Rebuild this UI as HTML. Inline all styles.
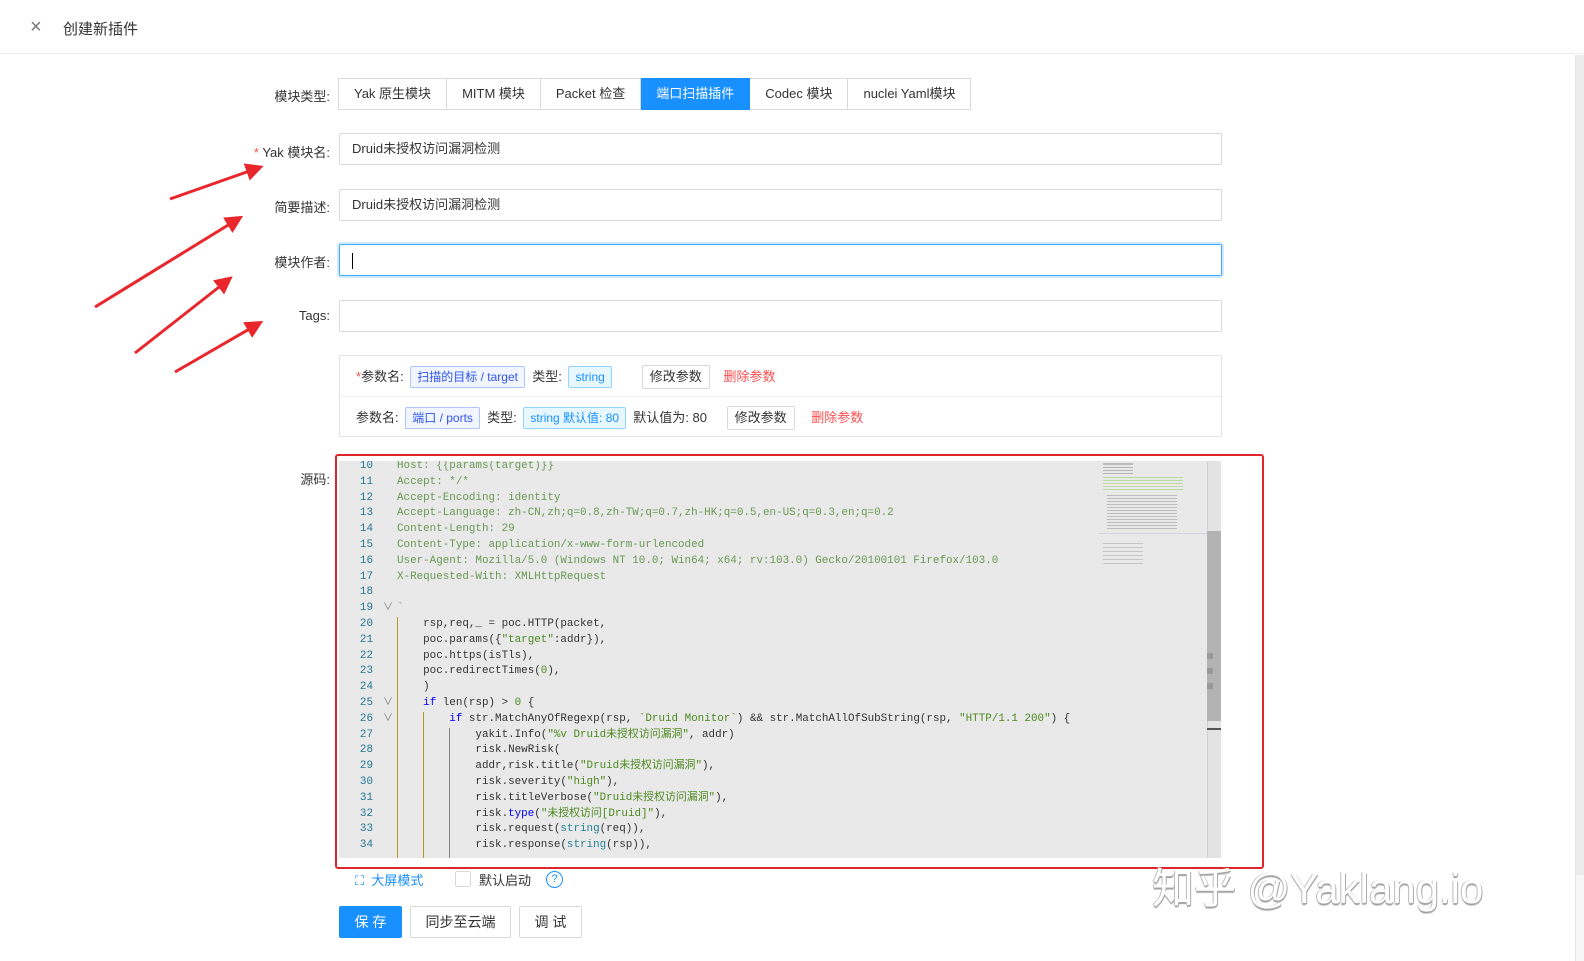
<!DOCTYPE html>
<html><head><meta charset="utf-8">
<style>
*{box-sizing:border-box;margin:0;padding:0}
body{width:1584px;height:961px;overflow:hidden;background:#fff;font-family:"Liberation Sans","Noto Sans CJK SC",sans-serif;font-size:13px;color:#333;position:relative}
.abs{position:absolute}
.hdr{left:0;top:0;width:1584px;height:54px;border-bottom:1px solid #ececec}
.lbl{text-align:right;width:90px;font-size:13px;color:#333}
.inp{left:339px;width:883px;height:32px;border:1px solid #d9d9d9;border-radius:2px;padding:0 12px;line-height:30px;font-size:13px;color:#333}
.seg{top:78px;left:338px;height:32px;display:flex}
.seg div{border:1px solid #d9d9d9;border-left:none;padding:0 15px;line-height:30px;font-size:13px;color:#333}
.seg div:first-child{border-left:1px solid #d9d9d9}
.seg .on{background:#1890ff;color:#fff;border-color:#1890ff}
.tag{display:inline-block;border:1px solid #adc6ff;background:#f0f5ff;color:#2f54eb;padding:0 6px;line-height:20px;font-size:12px;border-radius:2px}
.tagc{border-color:#91d5ff;background:#e6f7ff;color:#1890ff}
.btn{display:inline-block;border:1px solid #d9d9d9;padding:0 7px;line-height:22px;font-size:13px;color:#333;border-radius:2px}
.red{color:#ff4d4f}
.code{left:339px;top:461px;width:868px;height:397px;background:#e9e9e9;overflow:hidden;font-family:"Liberation Mono","Noto Sans CJK SC",monospace;font-size:10.9px;color:#333;line-height:14px}
.ln{position:absolute;left:0;width:34px;text-align:right;color:#237893;height:14px;line-height:14px}
.cl{position:absolute;left:58px;white-space:pre;height:14px;line-height:14px}
.g{color:#6a9955}
.s{color:#4d8a1f}
.k{color:#0000ff}
.t{color:#267f99}
</style></head><body>
<div class="abs hdr"></div>
<div class="abs" style="left:30px;top:17px;font-size:20px;color:#777;line-height:20px">×</div>
<div class="abs" style="left:63px;top:18px;font-size:15px;color:#333">创建新插件</div>

<div class="abs lbl" style="left:240px;top:86px">模块类型:</div>
<div class="abs seg"><div>Yak 原生模块</div><div>MITM 模块</div><div>Packet 检查</div><div class="on">端口扫描插件</div><div>Codec 模块</div><div>nuclei Yaml模块</div></div>

<div class="abs lbl" style="left:240px;top:142px"><span class="red">*</span> Yak 模块名:</div>
<div class="abs inp" style="top:133px">Druid未授权访问漏洞检测</div>
<div class="abs lbl" style="left:240px;top:197px">简要描述:</div>
<div class="abs inp" style="top:189px">Druid未授权访问漏洞检测</div>
<div class="abs lbl" style="left:240px;top:252px">模块作者:</div>
<div class="abs inp" style="top:244px;border-color:#40a9ff;box-shadow:0 0 0 2px rgba(24,144,255,.2)"><span style="display:inline-block;width:1px;height:16px;background:#000;vertical-align:middle"></span></div>
<div class="abs lbl" style="left:240px;top:308px">Tags:</div>
<div class="abs inp" style="top:300px"></div>

<div class="abs" style="left:339px;top:355px;width:883px;height:82px;border:1px solid #e3e3e3;border-radius:2px">
  <div style="position:absolute;left:0;right:0;top:40px;border-top:1px solid #eee"></div>
  <div style="position:absolute;left:16px;top:9px;white-space:nowrap"><span class="red">*</span>参数名: <span class="tag" style="margin-left:3px">扫描的目标 / target</span> &nbsp;类型: <span class="tag tagc" style="margin-left:3px">string</span><span class="btn" style="margin-left:30px">修改参数</span> <span class="red" style="margin-left:10px">删除参数</span></div>
  <div style="position:absolute;left:16px;top:50px;white-space:nowrap">参数名: <span class="tag" style="margin-left:3px">端口 / ports</span> &nbsp;类型: <span class="tag tagc" style="margin-left:3px">string 默认值: 80</span> &nbsp;默认值为: 80 <span class="btn" style="margin-left:16px">修改参数</span> <span class="red" style="margin-left:13px">删除参数</span></div>
</div>

<div class="abs lbl" style="left:240px;top:469px">源码:</div>
<div class="abs code">
<div class="ln" style="top:-2px">10</div><div class="cl g" style="top:-2px">Host: {{params(target)}}</div>
<div class="ln" style="top:13.8px">11</div><div class="cl g" style="top:13.8px">Accept: */*</div>
<div class="ln" style="top:29.6px">12</div><div class="cl g" style="top:29.6px">Accept-Encoding: identity</div>
<div class="ln" style="top:45.4px">13</div><div class="cl g" style="top:45.4px">Accept-Language: zh-CN,zh;q=0.8,zh-TW;q=0.7,zh-HK;q=0.5,en-US;q=0.3,en;q=0.2</div>
<div class="ln" style="top:61.2px">14</div><div class="cl g" style="top:61.2px">Content-Length: 29</div>
<div class="ln" style="top:77px">15</div><div class="cl g" style="top:77px">Content-Type: application/x-www-form-urlencoded</div>
<div class="ln" style="top:92.8px">16</div><div class="cl g" style="top:92.8px">User-Agent: Mozilla/5.0 (Windows NT 10.0; Win64; x64; rv:103.0) Gecko/20100101 Firefox/103.0</div>
<div class="ln" style="top:108.6px">17</div><div class="cl g" style="top:108.6px">X-Requested-With: XMLHttpRequest</div>
<div class="ln" style="top:124.4px">18</div>
<div class="ln" style="top:140.2px">19</div><div class="cl g" style="top:140.2px">`</div>
<div class="ln" style="top:156px">20</div><div class="cl" style="top:156px">    rsp,req,_ = poc.HTTP(packet,</div>
<div class="ln" style="top:171.8px">21</div><div class="cl" style="top:171.8px">    poc.params({<span class="s">"target"</span>:addr}),</div>
<div class="ln" style="top:187.6px">22</div><div class="cl" style="top:187.6px">    poc.https(isTls),</div>
<div class="ln" style="top:203.4px">23</div><div class="cl" style="top:203.4px">    poc.redirectTimes(<span class="s">0</span>),</div>
<div class="ln" style="top:219.2px">24</div><div class="cl" style="top:219.2px">    )</div>
<div class="ln" style="top:235px">25</div><div class="cl" style="top:235px">    <span class="k">if</span> len(rsp) &gt; <span class="s">0</span> {</div>
<div class="ln" style="top:250.8px">26</div><div class="cl" style="top:250.8px">        <span class="k">if</span> str.MatchAnyOfRegexp(rsp, <span class="s">`Druid Monitor`</span>) &amp;&amp; str.MatchAllOfSubString(rsp, <span class="s">"HTTP/1.1 200"</span>) {</div>
<div class="ln" style="top:266.6px">27</div><div class="cl" style="top:266.6px">            yakit.Info(<span class="s">"%v Druid未授权访问漏洞"</span>, addr)</div>
<div class="ln" style="top:282.4px">28</div><div class="cl" style="top:282.4px">            risk.NewRisk(</div>
<div class="ln" style="top:298.2px">29</div><div class="cl" style="top:298.2px">            addr,risk.title(<span class="s">"Druid未授权访问漏洞"</span>),</div>
<div class="ln" style="top:314px">30</div><div class="cl" style="top:314px">            risk.severity(<span class="s">"high"</span>),</div>
<div class="ln" style="top:329.8px">31</div><div class="cl" style="top:329.8px">            risk.titleVerbose(<span class="s">"Druid未授权访问漏洞"</span>),</div>
<div class="ln" style="top:345.6px">32</div><div class="cl" style="top:345.6px">            risk.<span class="k">type</span>(<span class="s">"未授权访问[Druid]"</span>),</div>
<div class="ln" style="top:361.4px">33</div><div class="cl" style="top:361.4px">            risk.request(<span class="t">string</span>(req)),</div>
<div class="ln" style="top:377.2px">34</div><div class="cl" style="top:377.2px">            risk.response(<span class="t">string</span>(rsp)),</div>
<div class="abs" style="left:44px;top:141px;color:#777;font-size:10px">∨</div>
<div class="abs" style="left:44px;top:236px;color:#777;font-size:10px">∨</div>
<div class="abs" style="left:44px;top:252px;color:#777;font-size:10px">∨</div>
<div class="abs" style="left:58px;top:156px;width:1px;height:245px;background:#b8942e"></div>
<div class="abs" style="left:84px;top:251px;width:1px;height:150px;background:#b8942e"></div>
<div class="abs" style="left:110px;top:267px;width:1px;height:134px;background:#888"></div>
<div class="abs" style="left:760px;top:0;width:108px;height:397px;opacity:.55">
  <div class="abs" style="left:4px;top:2px;width:30px;height:2px;background:#999"></div>
  <div class="abs" style="left:4px;top:6px;width:30px;height:8px;background:repeating-linear-gradient(#888 0 1px,transparent 1px 3px)"></div>
  <div class="abs" style="left:4px;top:16px;width:80px;height:14px;background:repeating-linear-gradient(#9c6 0 1px,transparent 1px 3px)"></div>
  <div class="abs" style="left:8px;top:34px;width:70px;height:36px;background:repeating-linear-gradient(#999 0 1px,transparent 1px 3px)"></div>
  <div class="abs" style="left:0;top:72px;width:108px;height:1px;background:#b9c8e0"></div>
  <div class="abs" style="left:4px;top:82px;width:40px;height:24px;background:repeating-linear-gradient(#aaa 0 1px,transparent 1px 4px)"></div>
</div>
</div>
<div class="abs" style="left:1207px;top:461px;width:14px;height:397px;background:#e3e3e3;border-left:1px solid #d0d0d0"></div>
<div class="abs" style="left:1207px;top:531px;width:14px;height:190px;background:#b3b3b3"></div>
<div class="abs" style="left:1207px;top:653px;width:6px;height:6px;background:#999"></div>
<div class="abs" style="left:1207px;top:668px;width:6px;height:6px;background:#999"></div>
<div class="abs" style="left:1207px;top:683px;width:6px;height:6px;background:#999"></div>
<div class="abs" style="left:1207px;top:728px;width:14px;height:2px;background:#555"></div>
<div class="abs" style="left:335px;top:454px;width:929px;height:415px;border:2px solid #e0262b;border-radius:3px"></div>

<div class="abs" style="left:355px;top:870px;color:#1890ff;font-size:13px">⛶ &nbsp;大屏模式</div>
<div class="abs" style="left:455px;top:871px;width:16px;height:16px;border:1px solid #d9d9d9;border-radius:2px"></div>
<div class="abs" style="left:479px;top:870px;font-size:13px">默认启动</div>
<div class="abs" style="left:546px;top:871px;width:17px;height:17px;border:1.5px solid #1890ff;border-radius:50%;color:#1890ff;font-size:11px;text-align:center;line-height:14px">?</div>

<div class="abs" style="left:339px;top:906px;width:63px;height:32px;background:#1890ff;color:#fff;text-align:center;line-height:32px;border-radius:2px;font-size:14px">保 存</div>
<div class="abs" style="left:410px;top:906px;width:101px;height:32px;border:1px solid #d9d9d9;text-align:center;line-height:30px;border-radius:2px;font-size:14px">同步至云端</div>
<div class="abs" style="left:519px;top:906px;width:63px;height:32px;border:1px solid #d9d9d9;text-align:center;line-height:30px;border-radius:2px;font-size:14px">调 试</div>

<div class="abs" style="left:1575px;top:55px;width:9px;height:906px;background:#f7f7f7;border-left:1px solid #e6e6e6"></div>
<div class="abs" style="left:1576px;top:55px;width:8px;height:820px;background:#ececec"></div>

<div class="abs" style="left:1152px;top:855px;font-size:42px;color:#fff;white-space:nowrap;text-shadow:1px 1px 0 #aaa,-1px 0 0 #bbb,0 2px 1px #999;font-family:'Liberation Sans','Noto Sans CJK SC',sans-serif">知乎 @Yaklang.io</div>

<svg class="abs" style="left:0;top:0" width="1584" height="961">
<defs><marker id="a" markerWidth="6" markerHeight="6" refX="4" refY="3" orient="auto"><path d="M0,0 L6,3 L0,6 Z" fill="#e8262b"/></marker></defs>
<g stroke="#e8262b" stroke-width="3" fill="none" marker-end="url(#a)">
<line x1="170" y1="199" x2="258" y2="168"/>
<line x1="95" y1="307" x2="238" y2="219"/>
<line x1="135" y1="353" x2="228" y2="280"/>
<line x1="175" y1="372" x2="258" y2="324"/>
</g></svg>
</body></html>
